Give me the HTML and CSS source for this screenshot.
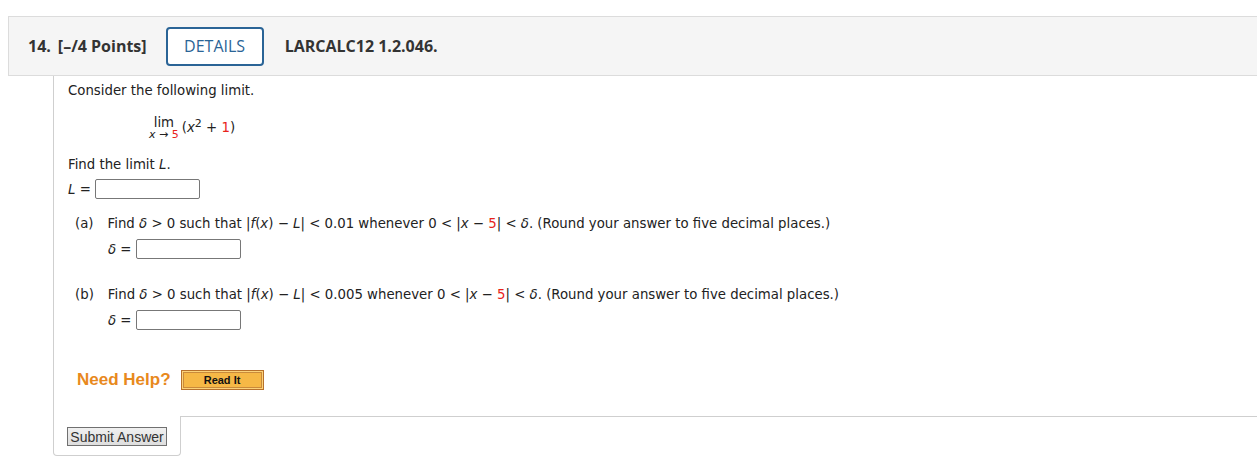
FILE: index.html
```html
<!DOCTYPE html>
<html lang="en">
<head>
  <meta charset="UTF-8" />
  <title>Question 14</title>
  <link rel="stylesheet" href="styles.css">
</head>
<body>
  <div class="question">
    <div class="question-header">
      <span class="q-number">14.</span>
      <span class="q-points">[–/4 Points]</span>
      <button class="details-btn">DETAILS</button>
      <span class="q-code">LARCALC12 1.2.046.</span>
    </div>

    <div class="question-body">
      <p class="intro">Consider the following limit.</p>

      <div class="limit">
        <span class="lim">
          <span class="lim-word">lim</span>
          <span class="lim-under"><i>x</i> → <span class="red">5</span></span>
        </span>
        <span class="lim-expr">(<i>x</i><sup>2</sup> + <span class="red">1</span>)</span>
      </div>

      <p class="find">Find the limit <i>L</i>.</p>
      <div class="answer-row">
        <span class="label"><i>L</i> =</span>
        <input class="answer" type="text">
      </div>

      <div class="part">
        <div class="part-line">
          <span class="part-tag">(a)</span>
          <span>Find <i>δ</i> &gt; 0 such that |<i>f</i>(<i>x</i>) − <i>L</i>| &lt; 0.01 whenever 0 &lt; |<i>x</i> − <span class="red">5</span>| &lt; <i>δ</i>. (Round your answer to five decimal places.)</span>
        </div>
        <div class="answer-row indent">
          <span class="label"><i>δ</i> =</span>
          <input class="answer" type="text">
        </div>
      </div>

      <div class="part">
        <div class="part-line">
          <span class="part-tag">(b)</span>
          <span>Find <i>δ</i> &gt; 0 such that |<i>f</i>(<i>x</i>) − <i>L</i>| &lt; 0.005 whenever 0 &lt; |<i>x</i> − <span class="red">5</span>| &lt; <i>δ</i>. (Round your answer to five decimal places.)</span>
        </div>
        <div class="answer-row indent">
          <span class="label"><i>δ</i> =</span>
          <input class="answer" type="text">
        </div>
      </div>

      <div class="help">
        <span class="need-help">Need Help?</span>
        <button class="read-it">Read It</button>
      </div>
    </div>

    <div class="question-footer">
      <div class="submit-box">
        <button class="submit-btn">Submit Answer</button>
      </div>
      <div class="footer-rest"></div>
    </div>
  </div>
</body>
</html>
```

FILE: styles.css
```css
body {
  margin: 0;
  padding: 16px 0 0 8px;
  background: #fff;
  color: #222;
  font-family: "DejaVu Sans", Verdana, sans-serif;
  font-size: 13.3px;
}

.question-header {
  display: flex;
  align-items: center;
  height: 58px;
  padding-left: 19px;
  background-color: #f5f5f5;
  border: 1px solid #dcdcdc;
  border-right: none;
  font-family: "Open Sans", sans-serif;
  font-size: 16px;
  color: #333;
}

.q-number,
.q-points,
.q-code {
  font-weight: bold;
}

.q-points {
  margin-left: 7px;
}

.details-btn {
  margin: 0 21px 0 19px;
  width: 98px;
  height: 39px;
  background: #fff;
  border: 2px solid #2a6496;
  border-radius: 4px;
  color: #2a6496;
  font-family: "Open Sans", sans-serif;
  font-size: 16px;
  cursor: pointer;
}

.question-body {
  margin-left: 45px;
  padding: 7px 0 26px 14px;
  border-left: 1px solid #cfcfcf;
}

p {
  margin: 0;
  line-height: 16px;
}

.red {
  color: #e8231b;
}

.limit {
  display: flex;
  align-items: flex-start;
  margin: 17px 0 0 81px;
  height: 36px;
}

.lim {
  display: inline-flex;
  flex-direction: column;
  align-items: center;
  line-height: 13px;
}

.lim-under {
  font-size: 11px;
  line-height: 11px;
}

.lim-expr {
  margin: 4px 0 0 3px;
  line-height: 16px;
}

.lim-expr sup {
  font-size: 11px;
  line-height: 0;
}

.find {
  margin-top: 5px;
}

.answer-row {
  display: flex;
  align-items: center;
  gap: 4px;
  margin-top: 6px;
}

.answer-row.indent {
  margin-left: 33px;
  margin-top: 7px;
}

.answer {
  box-sizing: border-box;
  width: 105px;
  height: 20px;
  margin: 0;
  border: 1px solid #777;
  border-radius: 2px;
}

.part {
  margin-left: 7px;
  margin-top: 17px;
}

.part + .part {
  margin-top: 28px;
}

.part-line {
  display: flex;
  gap: 14px;
  line-height: 16px;
}

.help {
  display: flex;
  align-items: center;
  gap: 10px;
  margin: 40px 0 0 9px;
}

.need-help {
  color: #e8891d;
  font-family: "Liberation Sans", Arial, sans-serif;
  font-size: 17px;
  font-weight: bold;
}

.read-it {
  width: 83px;
  height: 20px;
  padding: 0;
  background: #f6b846;
  border: 1px solid #b8712a;
  box-shadow: inset 0 0 0 1px #fbd27a, inset 0 0 0 2px #c98a3b;
  font-family: "Liberation Sans", Arial, sans-serif;
  font-size: 11px;
  font-weight: bold;
  color: #111;
  cursor: pointer;
}

.question-footer {
  display: flex;
  margin-left: 45px;
}

.submit-box {
  width: 128px;
  height: 40px;
  padding: 11px 0 0 13px;
  box-sizing: border-box;
  border: 1px solid #cfcfcf;
  border-top: none;
  border-radius: 0 0 4px 4px;
}

.footer-rest {
  flex: 1;
  border-top: 1px solid #cfcfcf;
}

.submit-btn {
  width: 100px;
  height: 19px;
  padding: 0;
  background: linear-gradient(#f0f0f0, #dedede);
  border: 1px solid #707070;
  font-family: "Liberation Sans", Arial, sans-serif;
  font-size: 14px;
  color: #333;
  cursor: pointer;
}
```
